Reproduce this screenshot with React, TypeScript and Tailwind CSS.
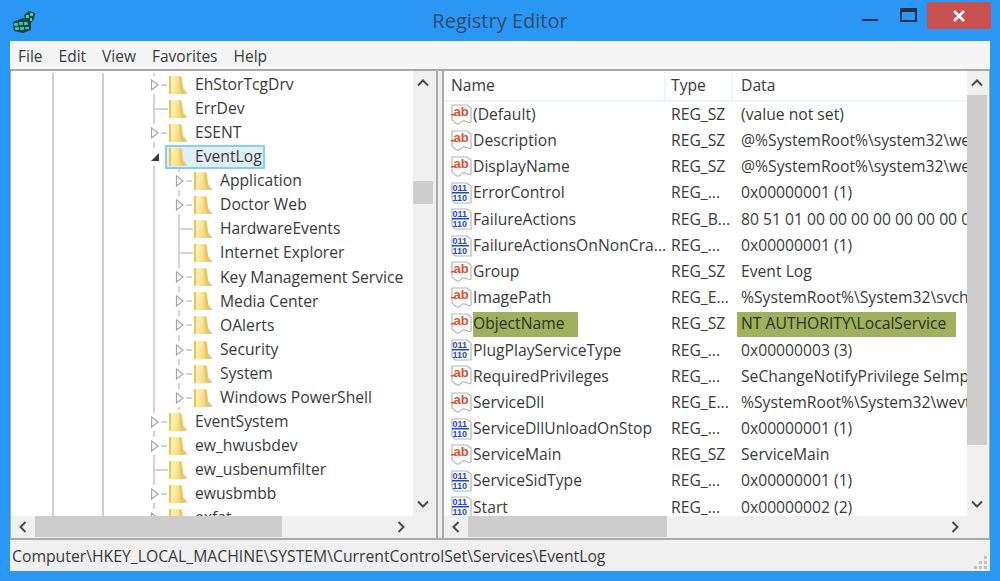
const font = "font-['Open_Sans','Noto_Sans',sans-serif]";

type TreeItem = { name: string; level: 1 | 2; kind: "closed" | "leaf" | "open"; selected?: boolean };

const tree: TreeItem[] = [
  { name: "EhStorTcgDrv", level: 1, kind: "closed" },
  { name: "ErrDev", level: 1, kind: "leaf" },
  { name: "ESENT", level: 1, kind: "closed" },
  { name: "EventLog", level: 1, kind: "open", selected: true },
  { name: "Application", level: 2, kind: "closed" },
  { name: "Doctor Web", level: 2, kind: "closed" },
  { name: "HardwareEvents", level: 2, kind: "leaf" },
  { name: "Internet Explorer", level: 2, kind: "leaf" },
  { name: "Key Management Service", level: 2, kind: "closed" },
  { name: "Media Center", level: 2, kind: "closed" },
  { name: "OAlerts", level: 2, kind: "closed" },
  { name: "Security", level: 2, kind: "closed" },
  { name: "System", level: 2, kind: "closed" },
  { name: "Windows PowerShell", level: 2, kind: "closed" },
  { name: "EventSystem", level: 1, kind: "closed" },
  { name: "ew_hwusbdev", level: 1, kind: "closed" },
  { name: "ew_usbenumfilter", level: 1, kind: "leaf" },
  { name: "ewusbmbb", level: 1, kind: "closed" },
  { name: "exfat", level: 1, kind: "closed" },
];

type Value = { name: string; type: string; data: string; bin?: boolean; hl?: boolean };

const values: Value[] = [
  { name: "(Default)", type: "REG_SZ", data: "(value not set)" },
  { name: "Description", type: "REG_SZ", data: "@%SystemRoot%\\system32\\wevtsvc.dll" },
  { name: "DisplayName", type: "REG_SZ", data: "@%SystemRoot%\\system32\\wevtsvc.dll" },
  { name: "ErrorControl", type: "REG_...", data: "0x00000001 (1)", bin: true },
  { name: "FailureActions", type: "REG_B...", data: "80 51 01 00 00 00 00 00 00 00 00 00", bin: true },
  { name: "FailureActionsOnNonCra...", type: "REG_...", data: "0x00000001 (1)", bin: true },
  { name: "Group", type: "REG_SZ", data: "Event Log" },
  { name: "ImagePath", type: "REG_E...", data: "%SystemRoot%\\System32\\svchost.exe" },
  { name: "ObjectName", type: "REG_SZ", data: "NT AUTHORITY\\LocalService", hl: true },
  { name: "PlugPlayServiceType", type: "REG_...", data: "0x00000003 (3)", bin: true },
  { name: "RequiredPrivileges", type: "REG_...", data: "SeChangeNotifyPrivilege SeImpersonate" },
  { name: "ServiceDll", type: "REG_E...", data: "%SystemRoot%\\System32\\wevtsvc.dll" },
  { name: "ServiceDllUnloadOnStop", type: "REG_...", data: "0x00000001 (1)", bin: true },
  { name: "ServiceMain", type: "REG_SZ", data: "ServiceMain" },
  { name: "ServiceSidType", type: "REG_...", data: "0x00000001 (1)", bin: true },
  { name: "Start", type: "REG_...", data: "0x00000002 (2)", bin: true },
];

function Folder() {
  return (
    <svg width="20" height="20" viewBox="0 0 20 20" className="shrink-0">
      <defs>
        <linearGradient id="fold" x1="0" y1="0" x2="1" y2="0.2">
          <stop offset="0" stopColor="#fff6c4" />
          <stop offset="0.55" stopColor="#f9e596" />
          <stop offset="1" stopColor="#eeca62" />
        </linearGradient>
      </defs>
      <path d="M12 12l2 0 5 5v2H10z" fill="#d9d2b4" />
      <path d="M1 1h10l3 1 1 12 2 4v1H1z" fill="url(#fold)" />
      <path d="M1 1h2v18H1z" fill="#e8c45a" />
      <path d="M11 1l2.500 1 1.500 12 2 5h-3l-2-6z" fill="#ecc75f" />
    </svg>
  );
}

function Expander({ kind }: { kind: TreeItem["kind"] }) {
  if (kind === "open") {
    return (
      <svg width="10" height="12" viewBox="0 0 10 12" className="shrink-0">
        <path d="M1 10h8V2z" fill="#3a3a3a" />
      </svg>
    );
  }
  return (
    <svg width="10" height="12" viewBox="0 0 10 12" className="shrink-0">
      <path d="M1.500 1v10L8 6z" fill="#fff" stroke="#a6a6a6" strokeWidth="1.200" />
    </svg>
  );
}

function Branch({ kind }: { kind: TreeItem["kind"] }) {
  if (kind === "leaf") {
    return (
      <div className="w-[18px] shrink-0 pl-[3px] flex">
        <div className="grow border-l-2 border-[#d4d4d4] flex items-center">
          <span className="w-full border-t-2 border-[#d4d4d4]" />
        </div>
      </div>
    );
  }
  return (
    <div className="w-[18px] shrink-0 flex items-center">
      <div className="w-[10px] h-full shrink-0 flex flex-col justify-between">
        <span className="ml-[3px] h-[3px] border-l-2 border-[#d4d4d4]" />
        <Expander kind={kind} />
        <span className="ml-[3px] h-[3px] border-l-2 border-[#d4d4d4]" />
      </div>
      {kind === "closed" && <span className="ml-[1px] w-[6px] border-t-2 border-[#d4d4d4]" />}
    </div>
  );
}

function TreeRow({ item }: { item: TreeItem }) {
  return (
    <div className="flex h-[24.05px] shrink-0">
      <div className="w-[41px] shrink-0" />
      <div className="w-[50px] shrink-0 border-l-2 border-[#cfcfcf]" />
      <div className="w-[48px] shrink-0 border-l-2 border-[#cfcfcf]" />
      {item.level === 2 && (
        <div className="w-[25px] shrink-0 pl-[3px]">
          <div className="h-full border-l-2 border-[#d4d4d4]" />
        </div>
      )}
      <Branch kind={item.kind} />
      <div
        className={
          item.selected
            ? "flex items-center h-[24px] -ml-[3px] pl-[1px] pr-[1px] gap-[7px] bg-[#e0f0fb] border-2 border-[#86cfee]"
            : "flex items-center h-[24px] gap-[7px]"
        }
      >
        <Folder />
        <span className="text-[15.7px] leading-none whitespace-nowrap text-[#3a3a3a]">{item.name}</span>
      </div>
    </div>
  );
}

function AbIcon() {
  return (
    <svg width="24" height="24" viewBox="0 0 24 24" className="shrink-0">
      <path d="M3 2h15l4 3v14c-3 2-5-2-8-1s-3 4-6 3-3-3-5-4z" fill="#fff" stroke="#b5b5b5" strokeWidth="1.200" />
      <text x="4.500" y="13" fontSize="13" fontWeight="700" fill="#e2502a" fontFamily="Liberation Sans, sans-serif">ab</text>
      <rect x="2" y="11" width="4" height="1.500" fill="#e2502a" />
    </svg>
  );
}

function BinIcon() {
  return (
    <svg width="24" height="24" viewBox="0 0 24 24" className="shrink-0">
      <path d="M3 2h15l4 3v17H6l-3-3z" fill="#fff" stroke="#b5b5b5" strokeWidth="1.200" />
      <text x="3.500" y="10" fontSize="9" fontWeight="700" fill="#1c46d8" fontFamily="Liberation Sans, sans-serif">011</text>
      <text x="3.500" y="20" fontSize="9" fontWeight="700" fill="#1c46d8" fontFamily="Liberation Sans, sans-serif">110</text>
      <rect x="3" y="11" width="17" height="1.500" fill="#1c46d8" />
    </svg>
  );
}

function ValueRow({ v }: { v: Value }) {
  return (
    <div className="flex h-[26.2px] shrink-0 items-center text-[15.7px] text-[#3a3a3a] whitespace-nowrap">
      <div className="flex items-center w-[222px] shrink-0 pl-[5px]">
        {v.bin ? <BinIcon /> : <AbIcon />}
        <span className={v.hl ? "bg-[#a0b05f] h-[25px] flex items-center w-[105px] text-[#29330f]" : ""}>{v.name}</span>
      </div>
      <div className="w-[67px] shrink-0 pl-[5px]">{v.type}</div>
      <div className="grow min-w-0 overflow-hidden pl-[8px]">
        {v.hl ? (
          <span className="flex items-center h-[25px] w-[219px] -ml-[4px] pl-[4px] bg-[#a0b05f] text-[#29330f]">{v.data}</span>
        ) : (
          v.data
        )}
      </div>
    </div>
  );
}

function Chevron({ dir }: { dir: "up" | "down" | "left" | "right" }) {
  const d = {
    up: "M2 9.500l5-5 5 5",
    down: "M2 4.500l5 5 5-5",
    left: "M9.500 2l-5 5 5 5",
    right: "M4.500 2l5 5-5 5",
  }[dir];
  return (
    <svg width="14" height="14" viewBox="0 0 14 14">
      <path d={d} fill="none" stroke="#4a4a4a" strokeWidth="2" />
    </svg>
  );
}

function VScroll({ before, thumb, top }: { before: number; thumb: number; top: number }) {
  return (
    <div className="w-[20px] shrink-0 flex flex-col bg-[#f0f0f0]">
      <div style={{ height: top }} className="shrink-0 flex items-center justify-center"><Chevron dir="up" /></div>
      <div className="grow min-h-0 flex flex-col">
        <div style={{ height: before }} className="shrink-0" />
        <div style={{ height: thumb }} className="shrink-0 bg-[#cdcdcd]" />
      </div>
      <div className="h-[24px] shrink-0 flex items-center justify-center"><Chevron dir="down" /></div>
    </div>
  );
}

function HScroll({ thumb }: { thumb: number }) {
  return (
    <div className="h-[21px] shrink-0 flex bg-[#f0f0f0] pr-[20px]">
      <div className="w-[24px] shrink-0 flex items-center justify-center"><Chevron dir="left" /></div>
      <div style={{ width: thumb }} className="shrink-0 bg-[#cdcdcd]" />
      <div className="grow" />
      <div className="w-[24px] shrink-0 flex items-center justify-center"><Chevron dir="right" /></div>
    </div>
  );
}

export default function App() {
  return (
    <div className={`w-[1000px] h-[581px] overflow-hidden flex flex-col bg-[#2b97f5] ${font}`}>
      {/* Title bar */}
      <div className="h-[41px] shrink-0 grid grid-cols-[1fr_auto_1fr] items-start">
        <svg width="24" height="24" viewBox="0 0 24 24" className="mt-[10px] ml-[12px]">
          <path d="M1 12l10-4 8 4v8l-8 3-9-2z" fill="#14413f" />
          <path d="M2 13h4v3H2zM7 12h4v3H7zM3 17h4v3H3zM8 17h4v3H8zM12 12h4v3h-4zM13 17h4v2h-4z" fill="#34c2b0" />
          <path d="M12 5l5-4 6 2-1 6-4 5-5-3z" fill="#14413f" />
          <path d="M14 5h3v3h-3zM18 3h3v3h-3zM18 8h2v3h-2z" fill="#3cd0bc" />
        </svg>
        <div className="text-center text-[20px] leading-[42px] text-[#2a4a6b] whitespace-nowrap">Registry Editor</div>
        <div className="flex items-start justify-end pr-[9px]">
          <div className="w-[38px] h-[30px] flex items-end justify-center pb-[9px]">
            <span className="w-[16px] h-[2px] bg-[#1d2d3a]" />
          </div>
          <div className="w-[38px] h-[30px] flex items-center justify-center">
            <span className="w-[17px] h-[14px] border-2 border-t-[4px] border-[#1d3247]" />
          </div>
          <div className="w-[64px] h-[27px] mt-[2px] bg-[#c75050] flex items-center justify-center">
            <svg width="14" height="14" viewBox="0 0 14 14">
              <path d="M2 2l10 10M12 2L2 12" stroke="#fff" strokeWidth="2.600" />
            </svg>
          </div>
        </div>
      </div>

      {/* Window body */}
      <div className="mx-[10px] w-[980px] h-[530px] shrink-0 flex flex-col bg-[#f0f0f0]">
        <div className="h-[28px] shrink-0 pt-[3px] flex items-center gap-[16px] pl-[8px] text-[15.5px] text-[#3a3a3a] bg-[#f5f5f5]">
          <span>File</span>
          <span>Edit</span>
          <span>View</span>
          <span>Favorites</span>
          <span>Help</span>
        </div>

        <div className="h-[471px] shrink-0 flex gap-[4px] border-t-2 border-b-2 border-[#a9a9a9]">
          {/* Key tree */}
          <div className="w-[428px] shrink-0 flex flex-col border-l border-r-2 border-[#a9a9a9] pr-[3px] pb-[1px] min-h-0">
            <div className="grow min-h-0 flex overflow-hidden">
              <div className="grow min-w-0 bg-white overflow-hidden flex flex-col pt-[2px]">
                {tree.map((t) => <TreeRow key={t.name} item={t} />)}
              </div>
              <VScroll top={24} before={86} thumb={23} />
            </div>
            <HScroll thumb={247} />
          </div>

          {/* Values */}
          <div className="grow min-w-0 flex flex-col border-l-2 border-r border-[#a9a9a9] pr-[2px] pb-[1px] min-h-0">
            <div className="grow min-h-0 flex overflow-hidden">
              <div className="grow min-w-0 bg-white overflow-hidden flex flex-col">
                <div className="h-[30.5px] shrink-0 pt-[1px] flex items-center text-[15.7px] text-[#3a3a3a] border-b-2 border-[#eef5fb]">
                  <div className="w-[222px] shrink-0 pl-[7px] border-r-2 border-[#eef5fb] h-full flex items-center">Name</div>
                  <div className="w-[67px] shrink-0 pl-[5px] border-r-2 border-[#eef5fb] h-full flex items-center">Type</div>
                  <div className="grow pl-[8px]">Data</div>
                </div>
                {values.map((v) => <ValueRow key={v.name} v={v} />)}
              </div>
              <VScroll top={24} before={0} thumb={350} />
            </div>
            <HScroll thumb={199} />
          </div>
        </div>

        <div className="grow pt-[2px] flex items-center justify-between pl-[2px] text-[15.75px] text-[#3a3a3a] bg-[#f0f0f0]">
          <span className="whitespace-nowrap">Computer\HKEY_LOCAL_MACHINE\SYSTEM\CurrentControlSet\Services\EventLog</span>
          <svg width="14" height="14" viewBox="0 0 14 14" className="self-end mb-[2px] mr-[2px]">
            <path d="M10 1h3v3h-3zM5 6h3v3H5zM10 6h3v3h-3zM0 11h3v3H0zM5 11h3v3H5zM10 11h3v3h-3z" fill="#c2c2c2" />
          </svg>
        </div>
      </div>
    </div>
  );
}
